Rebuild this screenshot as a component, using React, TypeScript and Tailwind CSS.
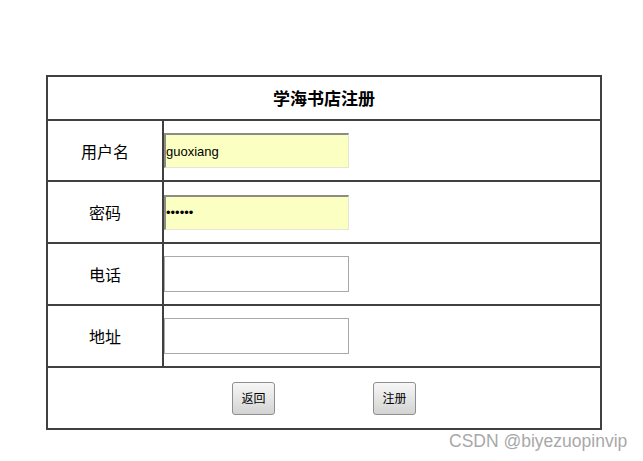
import React from "react";

const cjk = { fontFamily: '"Noto Sans CJK SC", "Liberation Sans", sans-serif' };

function Row({ label, h, children }: { label: string; h: string; children: React.ReactNode }) {
  return (
    <div className={`flex ${h} border-t-2 border-[#404040]`}>
      <div
        className="w-[116px] shrink-0 flex items-center justify-center border-r-2 border-[#404040] text-[16px] text-black"
        style={cjk}
      >
        {label}
      </div>
      <div className="flex-1 flex items-center">{children}</div>
    </div>
  );
}

export default function App() {
  return (
    <div className="relative w-[643px] h-[461px] bg-white overflow-hidden">
      <div className="pt-[75px] pl-[46px]">
        <div className="w-[556px] h-[355px] border-2 border-[#404040] flex flex-col">
          <div
            className="h-[42px] flex items-center justify-center text-[17px] font-bold text-black"
            style={cjk}
          >
            学海书店注册
          </div>
          <Row label="用户名" h="h-[61px]">
            <input
              readOnly
              defaultValue="guoxiang"
              className="w-[185px] h-[35px] bg-[#fbffc2] border-t-2 border-l-2 border-r border-b border-t-[#8c8c84] border-l-[#8c8c84] border-r-[#e6e6d8] border-b-[#e6e6d8] pl-0 text-[13px] text-black outline-none"
              style={{ fontFamily: '"Liberation Sans", Arial, sans-serif' }}
            />
          </Row>
          <Row label="密码" h="h-[62px]">
            <input
              readOnly
              type="password"
              defaultValue="123456"
              className="w-[185px] h-[35px] bg-[#fbffc2] border-t-2 border-l-2 border-r border-b border-t-[#8c8c84] border-l-[#8c8c84] border-r-[#e6e6d8] border-b-[#e6e6d8] pl-0 text-[13px] text-black outline-none"
              style={{ fontFamily: '"Liberation Sans", Arial, sans-serif' }}
            />
          </Row>
          <Row label="电话" h="h-[62px]">
            <input
              readOnly
              className="w-[185px] h-[36px] bg-white border border-[#a9a9a9] outline-none"
            />
          </Row>
          <Row label="地址" h="h-[62px]">
            <input
              readOnly
              className="w-[185px] h-[36px] bg-white border border-[#a9a9a9] outline-none"
            />
          </Row>
          <div className="flex-1 border-t-2 border-[#404040] flex items-center justify-center gap-[98px]">
            <button
              className="w-[43px] h-[33px] rounded-[3px] border border-[#8f8f8f] bg-gradient-to-b from-[#f7f7f7] to-[#d3d3d3] text-[12px] text-black"
              style={cjk}
            >
              返回
            </button>
            <button
              className="w-[43px] h-[33px] rounded-[3px] border border-[#8f8f8f] bg-gradient-to-b from-[#f7f7f7] to-[#d3d3d3] text-[12px] text-black"
              style={cjk}
            >
              注册
            </button>
          </div>
        </div>
      </div>
      <div
        className="absolute left-[449px] top-[431px] leading-[20px] text-[17.5px] text-[#a8a8a8] whitespace-nowrap"
        style={{ fontFamily: '"Liberation Sans", Arial, sans-serif' }}
      >
        CSDN @biyezuopinvip
      </div>
    </div>
  );
}
